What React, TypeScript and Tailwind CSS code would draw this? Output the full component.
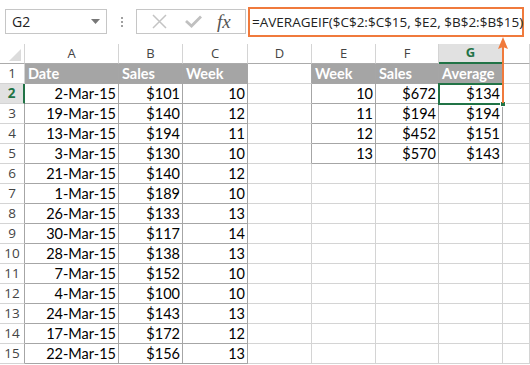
import clsx from 'clsx';

const cn = clsx;

const cols = ['A', 'B', 'C', 'D', 'E', 'F', 'G', ''];

const leftTable = [
  ['2-Mar-15', '$101', '10'],
  ['19-Mar-15', '$140', '12'],
  ['13-Mar-15', '$194', '11'],
  ['3-Mar-15', '$130', '10'],
  ['21-Mar-15', '$140', '12'],
  ['1-Mar-15', '$189', '10'],
  ['26-Mar-15', '$133', '13'],
  ['30-Mar-15', '$117', '14'],
  ['28-Mar-15', '$138', '13'],
  ['7-Mar-15', '$152', '10'],
  ['4-Mar-15', '$100', '10'],
  ['24-Mar-15', '$143', '13'],
  ['17-Mar-15', '$172', '12'],
  ['22-Mar-15', '$156', '13'],
];

const rightTable = [
  ['10', '$672', '$134'],
  ['11', '$194', '$194'],
  ['12', '$452', '$151'],
  ['13', '$570', '$143'],
];

// r = sheet row (1-based), c = column index (0 = A)
const inTable = (r: number, c: number) =>
  (r >= 1 && r <= 15 && c >= 0 && c <= 2) || (r >= 1 && r <= 5 && c >= 4 && c <= 6);

function cellValue(r: number, c: number): { text: string; header?: boolean } {
  if (r === 1) {
    const h = ['Date', 'Sales', 'Week', '', 'Week', 'Sales', 'Average', ''];
    return { text: h[c], header: inTable(1, c) };
  }
  if (c <= 2) return { text: leftTable[r - 2][c] };
  if (c >= 4 && c <= 6 && r <= 5) return { text: rightTable[r - 2][c - 4] };
  return { text: '' };
}

function FormulaBar() {
  return (
    <div className="relative flex h-[44px] items-start">
      {/* Name box */}
      <div className="ml-[5px] mt-[9px] flex h-[25px] w-[102px] items-center justify-between border border-[#c6c6c6] pl-[6px] pr-[6px] text-[14px] text-[#222] font-['Open_Sans',sans-serif]">
        <span>G2</span>
        <svg width="9" height="5" viewBox="0 0 9 5">
          <path d="M0 0 L9 0 L4.5 5 Z" fill="#777" />
        </svg>
      </div>
      {/* drag dots */}
      <div className="ml-[14px] mt-[17px] flex flex-col gap-[2px]">
        <div className="h-[2px] w-[2px] bg-[#a0a0a0]" />
        <div className="h-[2px] w-[2px] bg-[#a0a0a0]" />
        <div className="h-[2px] w-[2px] bg-[#a0a0a0]" />
      </div>
      {/* Cancel / enter / fx */}
      <div className="ml-[13px] mt-[9px] flex h-[25px] w-[110px] items-center border border-[#c6c6c6] pl-[15px]">
        <svg width="15" height="15" viewBox="0 0 15 15">
          <path d="M1 1 L14 14 M14 1 L1 14" stroke="#c4c4c4" strokeWidth="1.5" />
        </svg>
        <svg className="ml-[18px]" width="17" height="13" viewBox="0 0 17 13">
          <path d="M1 6 L6.5 11 L16 1.5" stroke="#c0c0c0" strokeWidth="2.8" fill="none" />
        </svg>
        <span className="ml-[15px] font-['Liberation_Serif',serif] text-[19px] italic leading-none text-[#555]">
          fx
        </span>
      </div>
      {/* Formula */}
      <div className="ml-[2px] mt-[7px] flex h-[30px] w-[276px] items-center border-2 border-[#f07a3c] pl-[2px] font-['Open_Sans',sans-serif] text-[13.5px] whitespace-nowrap text-[#222]">
        =AVERAGEIF($C$2:$C$15, $E2, $B$2:$B$15)
      </div>
    </div>
  );
}

export default function App() {
  const rows = Array.from({ length: 15 }, (_, i) => i + 1);

  return (
    <div className="relative h-[365px] w-[530px] overflow-hidden bg-white font-['Lato',sans-serif]">
      <FormulaBar />

      <div className="grid grid-cols-[25px_94px_64px_65px_64px_64px_63px_64px_1fr]">
        {/* column headers */}
        <div className="relative h-[20px] border-b border-r border-[#d4d4d4] border-b-[#ababab]">
          <svg className="absolute bottom-[2px] right-[3px]" width="12" height="12" viewBox="0 0 12 12">
            <path d="M12 0 L12 12 L0 12 Z" fill="#dcdcdc" />
          </svg>
        </div>
        {cols.map((l, c) => (
          <div
            key={'h' + c}
            className={cn(
              "flex h-[20px] items-center justify-center border-r border-[#d4d4d4] font-['Open_Sans',sans-serif] text-[13px]",
              c === 6
                ? 'border-b-2 border-b-[#217346] bg-[#e1e1e1] font-bold text-[#217346]'
                : 'border-b border-b-[#ababab] text-[#444]'
            )}
          >
            {l}
          </div>
        ))}

        {rows.map((r) => (
          <div key={'r' + r} className="contents">
            <div
              className={cn(
                "flex h-[20px] items-center justify-center border-b border-[#d4d4d4] font-['Open_Sans',sans-serif] text-[13.5px]",
                r === 2
                  ? 'border-r-2 border-r-[#217346] bg-[#e1e1e1] font-bold text-[#217346]'
                  : r === 1
                    ? 'border-r border-r-[#d4d4d4] text-[#444]'
                    : 'border-r border-r-[#a6a6a6] text-[#444]'
              )}
            >
              {r}
            </div>
            {cols.map((_, c) => {
              const v = c < 7 ? cellValue(r, c) : { text: '' };
              const rightDark = inTable(r, c) || inTable(r, c + 1);
              const bottomDark = inTable(r, c) || inTable(r + 1, c);
              return (
                <div
                  key={r + '-' + c}
                  className={cn(
                    'flex h-[20px] items-center overflow-hidden whitespace-nowrap border-b border-r text-[14.5px] leading-none',
                    rightDark ? 'border-r-[#a6a6a6]' : 'border-r-[#d4d4d4]',
                    bottomDark ? 'border-b-[#a6a6a6]' : 'border-b-[#d4d4d4]',
                    v.header
                      ? 'justify-start bg-[#a5a5a5] pl-[3px] pt-[1px] font-bold text-white'
                      : 'justify-end pr-[2px] pt-[1px] text-black'
                  )}
                >
                  {v.text}
                </div>
              );
            })}
          </div>
        ))}
      </div>

      {/* active cell G2 */}
      <div className="absolute left-[438px] top-[83px] h-[22px] w-[66px] border-2 border-[#217346]" />
      <div className="absolute left-[500px] top-[101px] h-[6px] w-[6px] border border-white bg-[#217346]" />

      {/* arrow from G2 up to formula */}
      <svg className="absolute left-[496px] top-[37px]" width="14" height="68" viewBox="0 0 14 68">
        <path d="M7 8 L7 66" stroke="#f07a3c" strokeWidth="2" />
        <path d="M7 0 L12 12 L7 10 L2 12 Z" fill="#f07a3c" />
      </svg>
    </div>
  );
}
